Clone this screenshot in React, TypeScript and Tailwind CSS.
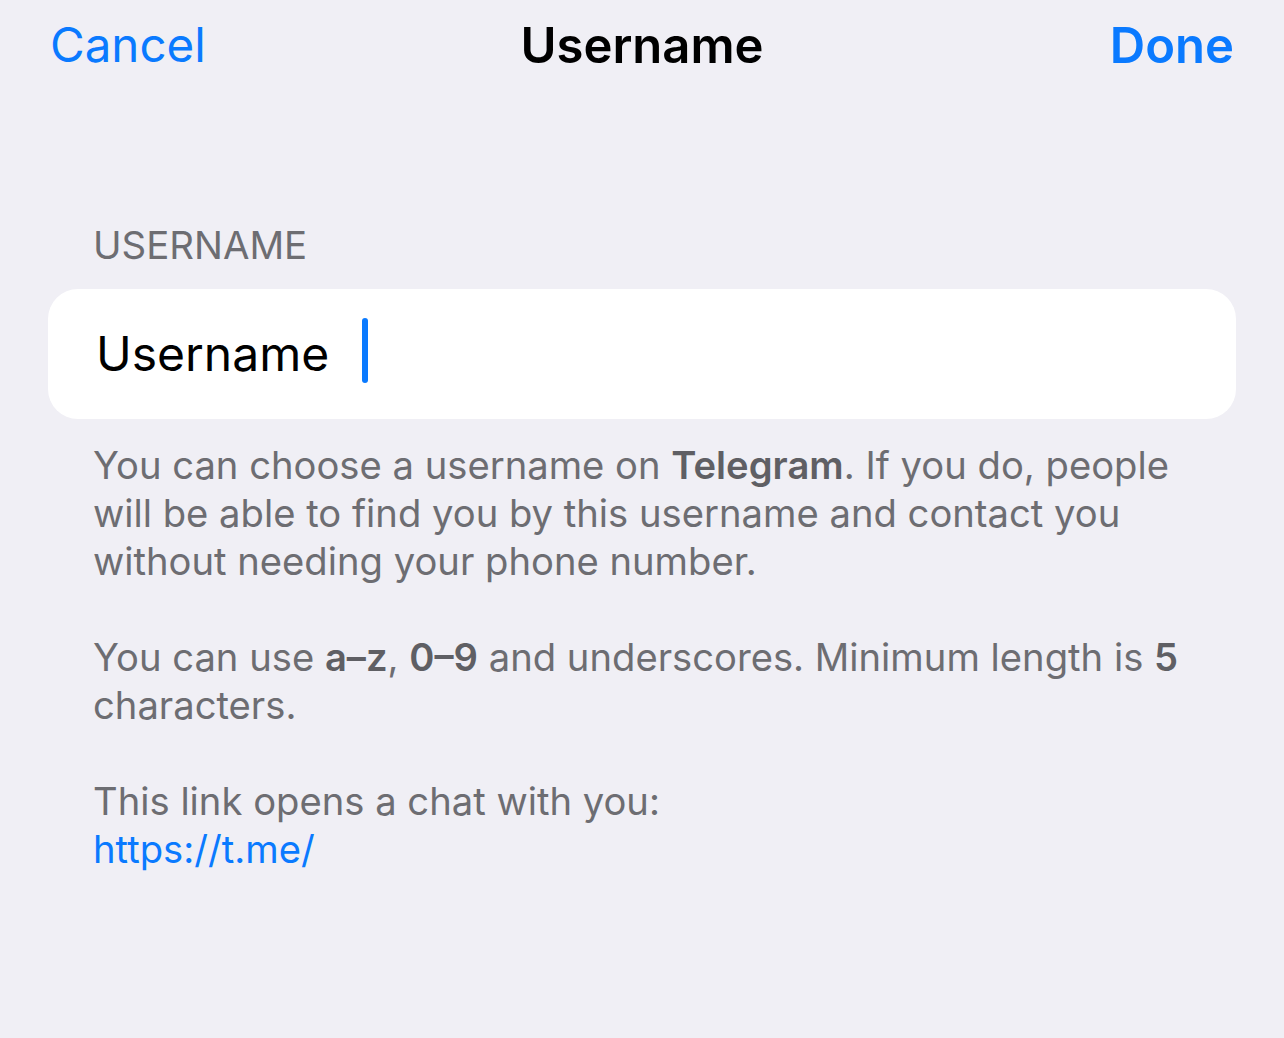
import React from 'react'

const font = { fontFamily: 'Inter, "Liberation Sans", sans-serif' }

export default function App() {
  return (
    <div className="min-h-screen w-full bg-[#f0eff5] text-black" style={font}>
      <div className="grid h-[90px] grid-cols-3 items-center px-[50px]">
        <span className="justify-self-start text-[47.5px] leading-none text-[#0a7aff]">Cancel</span>
        <span className="justify-self-center text-[49px] font-semibold leading-none">Username</span>
        <span className="justify-self-end text-[49px] font-semibold leading-none text-[#0a7aff]">Done</span>
      </div>

      <div className="mt-[131px] px-[93px] text-[38.4px] leading-[48px] text-[#6d6d72]">USERNAME</div>

      <div className="mx-[48px] mt-[20px] flex h-[130px] items-center rounded-[30px] bg-white px-[48px]">
        <span className="text-[48px] leading-none">Username</span>
        <span className="ml-[33px] -mt-[8px] h-[65px] w-[6px] rounded-full bg-[#0a7aff]" />
      </div>

      <div className="mt-[22px] px-[93px] text-[38.2px] leading-[48px] text-[#6d6d72]">
        <p>
          You can choose a username on <span className="font-semibold text-[#5f5f64]">Telegram</span>. If you do, people
          <br />
          will be able to find you by this username and contact you
          <br />
          without needing your phone number.
        </p>
        <p className="mt-[48px]">
          You can use <span className="font-semibold text-[#5f5f64]">a–z</span>, <span className="font-semibold text-[#5f5f64]">0–9</span> and underscores. Minimum length is <span className="font-semibold text-[#5f5f64]">5</span>
          <br />
          characters.
        </p>
        <p className="mt-[48px]">
          This link opens a chat with you:
          <br />
          <span className="text-[#0a7aff]">https://t.me/</span>
        </p>
      </div>
    </div>
  )
}
